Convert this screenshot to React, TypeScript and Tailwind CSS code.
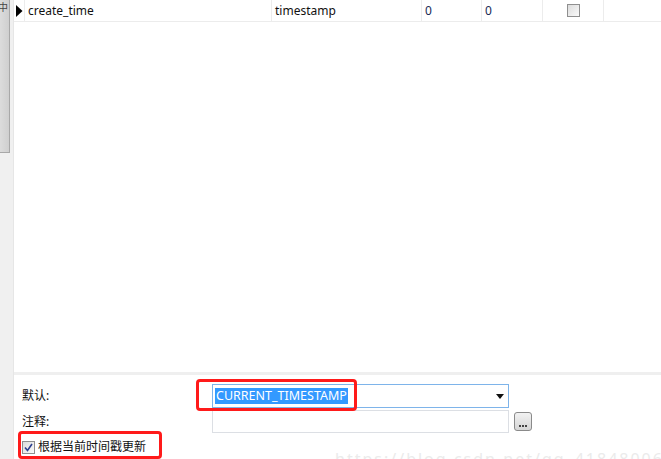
import React from "react";

const font = { fontFamily: '"Noto Sans", "Noto Sans CJK SC", sans-serif' };

export default function App() {
  return (
    <div
      className="relative flex w-[661px] h-[459px] overflow-hidden bg-white text-[12px] text-[#111]"
      style={font}
    >
      {/* left strip */}
      <div className="flex w-[13px] flex-col">
        <div className="flex h-[153px]">
          <div className="relative w-[10px] h-full overflow-hidden bg-gradient-to-r from-[#dcdcdc] to-[#cfcfcf] border-r border-b border-[#a8a8a8]">
            <span className="absolute left-[-2px] top-[2px] text-[10px] leading-none text-[#444]">中</span>
          </div>
          <div className="w-[3px] bg-[#f0f0f0]" />
        </div>
        <div className="flex-1 bg-[#f0f0f0]" />
      </div>
      <div className="w-px bg-[#e6e6e6]" />

      {/* main */}
      <div className="flex flex-1 flex-col">
        <div className="flex-1">
          <div className="flex h-[22px] border-b border-[#ececec] leading-[21px]">
            <div className="flex w-[11px] items-center justify-center border-r border-[#ececec]">
              <svg width="8" height="12" viewBox="0 0 8 12">
                <path d="M1 0 L7.5 6 L1 12 Z" fill="#000" />
              </svg>
            </div>
            <div className="w-[247px] pl-[3px] border-r border-[#ececec]">create_time</div>
            <div className="w-[150px] pl-[3px] border-r border-[#ececec]">timestamp</div>
            <div className="w-[60px] pl-[3px] border-r border-[#ececec] text-[#1a2a55]">0</div>
            <div className="w-[61px] pl-[3px] border-r border-[#ececec] text-[#1a2a55]">0</div>
            <div className="flex w-[61px] items-center justify-center border-r border-[#ececec]">
              <div className="h-[13px] w-[13px] border border-[#8f8f8f] bg-gradient-to-br from-[#dcdcdc] to-[#fafafa]" />
            </div>
            <div className="flex-1" />
          </div>
        </div>

        <div className="h-[3px] bg-[#efefef]" />

        <div className="flex h-[84px] flex-col pl-[8px]">
          <div className="mt-[9px] flex h-[24px] items-center">
            <div className="w-[190px]">默认:</div>
            <div className="flex h-[24px] w-[297px] items-center justify-between border border-[#7eb4ea] pl-[2px] pr-[4px]">
              <span className="bg-[#3399ff] px-[1px] text-[12.5px] leading-[16px] text-white">CURRENT_TIMESTAMP</span>
              <svg width="8" height="5" viewBox="0 0 8 5">
                <path d="M0 0 L8 0 L4 5 Z" fill="#111" />
              </svg>
            </div>
          </div>
          <div className="mt-[2px] flex h-[23px] items-center">
            <div className="w-[190px]">注释:</div>
            <div className="h-[23px] w-[297px] border border-[#dcdfe4]" />
            <div className="ml-[5px] flex h-[19px] w-[18px] items-end justify-center rounded-[3px] border border-[#8a8a8a] bg-gradient-to-b from-[#f2f2f2] to-[#d6d6d6] pb-[3px]">
              <span className="block h-[2px] w-[8px] border-t-2 border-dotted border-[#444]" />
            </div>
          </div>
          <div className="mt-[5px] flex items-center">
            <div className="flex h-[13px] w-[13px] items-center justify-center border border-[#8f8f8f] bg-gradient-to-br from-[#dcdcdc] to-[#fafafa]">
              <svg width="9" height="9" viewBox="0 0 9 9">
                <path d="M1 4.5 L3.5 7.5 L8 1" stroke="#2b3f8f" strokeWidth="1.6" fill="none" />
              </svg>
            </div>
            <span className="ml-[3px]">根据当前时间戳更新</span>
          </div>
        </div>
      </div>

      {/* annotations */}
      <div className="absolute left-[196px] top-[379px] h-[32px] w-[161px] rounded-[4px] border-[3px] border-[#ff1a1a]" />
      <div className="absolute left-[18px] top-[431px] h-[28px] w-[144px] rounded-[4px] border-[3px] border-[#ff1a1a]" />

      {/* watermark */}
      <div className="absolute left-[335px] top-[447px] whitespace-nowrap text-[16px] tracking-[2px] text-[#ebebeb]">
        https://blog.csdn.net/qq_41848006
      </div>
    </div>
  );
}
